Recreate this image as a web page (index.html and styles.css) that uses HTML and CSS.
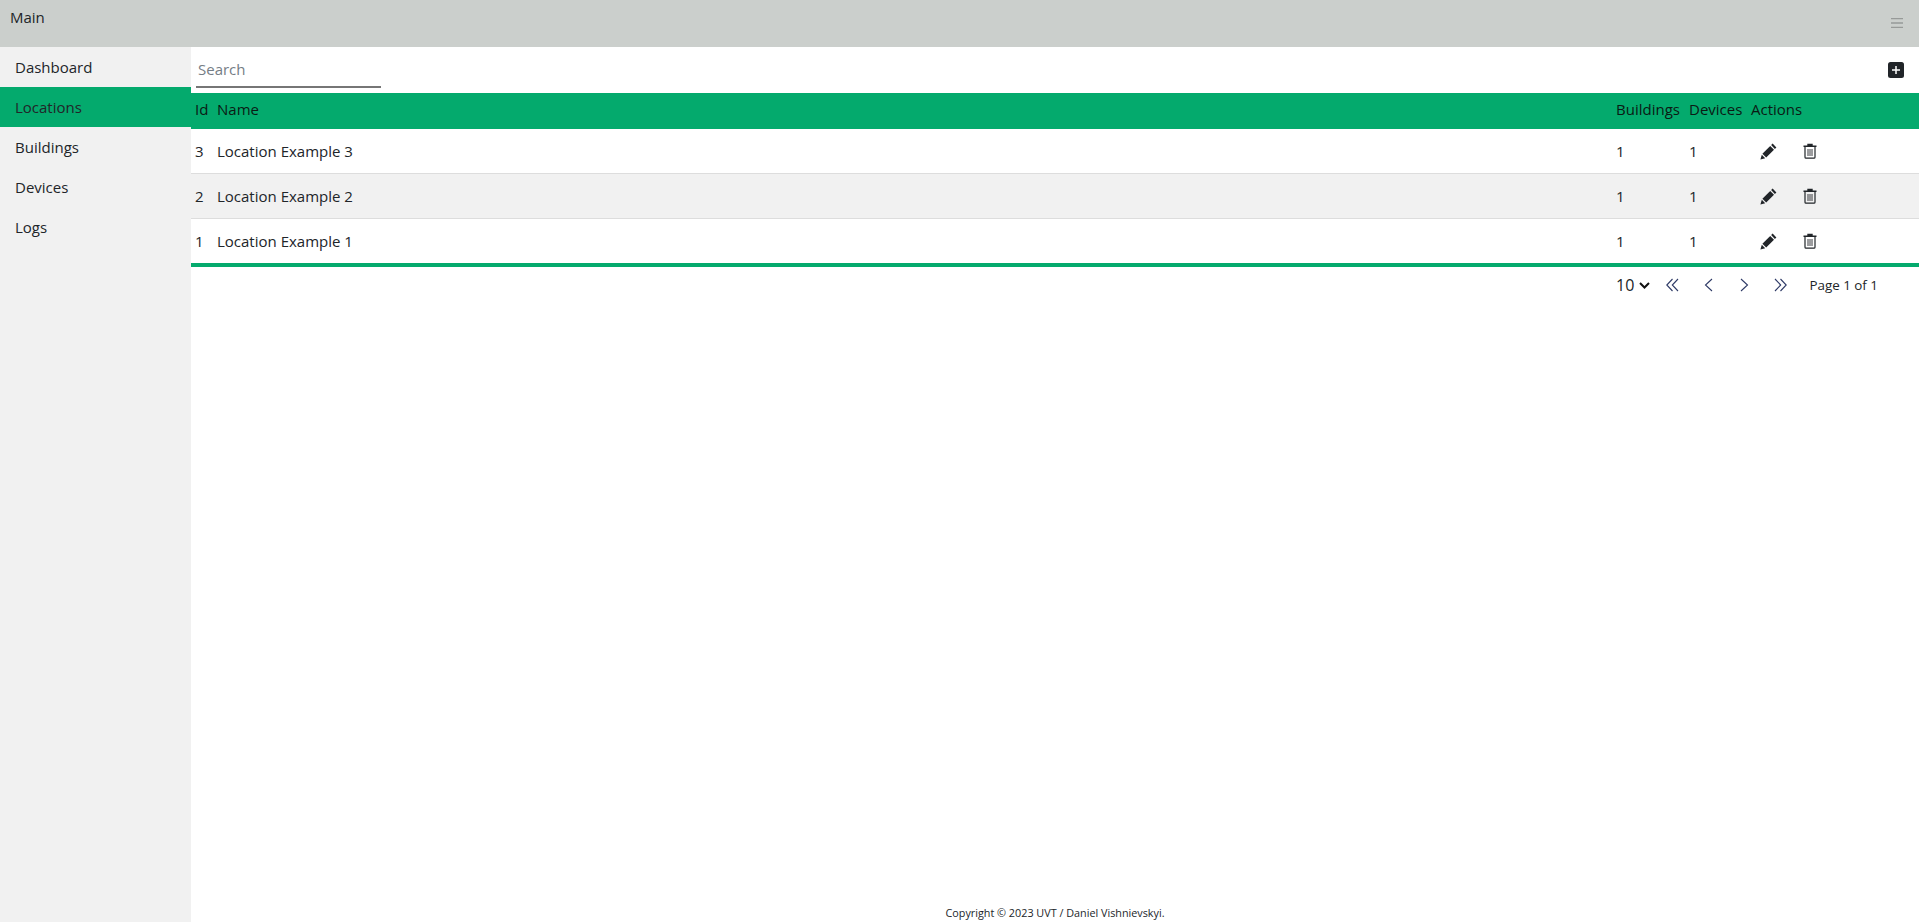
FILE: index.html
```html
<!DOCTYPE html>
<html lang="en">
<head>
    <meta charset="UTF-8">
    <meta content="width=device-width" name="viewport">
    <title>Locations</title>
    <link rel="stylesheet" href="styles.css">
</head>
<body>
    <div class="topbar">
        <span class="brand">Main</span>
        <button class="toggler" aria-label="Menu">
            <svg width="12" height="10" viewBox="0 0 12 10"><path d="M0 0.5h12M0 5h12M0 9.5h12" stroke="#979a98" stroke-width="1.4"/></svg>
        </button>
    </div>
    <div class="layout">
        <nav class="sidebar">
            <a href="#">Dashboard</a>
            <a href="#" class="active">Locations</a>
            <a href="#">Buildings</a>
            <a href="#">Devices</a>
            <a href="#">Logs</a>
        </nav>
        <div class="content">
            <div class="toolbar">
                <input class="search" type="text" placeholder="Search">
                <button class="add" aria-label="Add">
                    <svg width="16" height="16" viewBox="0 0 16 16"><rect width="16" height="16" rx="2.5" fill="#212529"/><path d="M8 4v8M4 8h8" stroke="#fff" stroke-width="1.5"/></svg>
                </button>
            </div>
            <table cellspacing="0" cellpadding="0">
                <colgroup>
                    <col class="c-id"><col><col class="c-buildings"><col class="c-devices"><col class="c-actions">
                </colgroup>
                <thead>
                    <tr><th>Id</th><th>Name</th><th>Buildings</th><th>Devices</th><th>Actions</th></tr>
                </thead>
                <tbody>
                    <tr>
                        <td>3</td><td>Location Example 3</td><td>1</td><td>1</td>
                        <td class="actions">
                            <div class="icons">
                                <svg width="17" height="17" viewBox="0 0 17 17"><path d="M12.6 0.6 16.4 4.4 14.9 5.9 11.1 2.1zM10.2 3 14 6.8 6.2 14.6 2.4 10.8zM1.8 11.8 5.2 15.2 0.4 16.6z" fill="#212529"/></svg>
                                <svg width="14" height="16" viewBox="0 0 14 16"><path d="M0.5 2.4h13v1.6h-13zM4.3 2.4V0.8h5.4v1.6" fill="#212529"/><path d="M2 4v10.2c0 .6.4 1 1 1h8c.6 0 1-.4 1-1V4" fill="none" stroke="#212529" stroke-width="1.2"/><path d="M5 6v7M7 6v7M9 6v7" stroke="#212529" stroke-width=".9"/></svg>
                            </div>
                        </td>
                    </tr>
                    <tr class="even">
                        <td>2</td><td>Location Example 2</td><td>1</td><td>1</td>
                        <td class="actions">
                            <div class="icons">
                                <svg width="17" height="17" viewBox="0 0 17 17"><path d="M12.6 0.6 16.4 4.4 14.9 5.9 11.1 2.1zM10.2 3 14 6.8 6.2 14.6 2.4 10.8zM1.8 11.8 5.2 15.2 0.4 16.6z" fill="#212529"/></svg>
                                <svg width="14" height="16" viewBox="0 0 14 16"><path d="M0.5 2.4h13v1.6h-13zM4.3 2.4V0.8h5.4v1.6" fill="#212529"/><path d="M2 4v10.2c0 .6.4 1 1 1h8c.6 0 1-.4 1-1V4" fill="none" stroke="#212529" stroke-width="1.2"/><path d="M5 6v7M7 6v7M9 6v7" stroke="#212529" stroke-width=".9"/></svg>
                            </div>
                        </td>
                    </tr>
                    <tr>
                        <td>1</td><td>Location Example 1</td><td>1</td><td>1</td>
                        <td class="actions">
                            <div class="icons">
                                <svg width="17" height="17" viewBox="0 0 17 17"><path d="M12.6 0.6 16.4 4.4 14.9 5.9 11.1 2.1zM10.2 3 14 6.8 6.2 14.6 2.4 10.8zM1.8 11.8 5.2 15.2 0.4 16.6z" fill="#212529"/></svg>
                                <svg width="14" height="16" viewBox="0 0 14 16"><path d="M0.5 2.4h13v1.6h-13zM4.3 2.4V0.8h5.4v1.6" fill="#212529"/><path d="M2 4v10.2c0 .6.4 1 1 1h8c.6 0 1-.4 1-1V4" fill="none" stroke="#212529" stroke-width="1.2"/><path d="M5 6v7M7 6v7M9 6v7" stroke="#212529" stroke-width=".9"/></svg>
                            </div>
                        </td>
                    </tr>
                </tbody>
            </table>
            <div class="pager">
                <span class="size">10
                    <svg width="11" height="7" viewBox="0 0 11 7"><path d="M1 1l4.5 4.5L10 1" fill="none" stroke="#111" stroke-width="2"/></svg>
                </span>
                <svg class="arrow" width="13" height="14" viewBox="0 0 13 14"><path d="M6.5 1 0.8 7l5.7 6M12 1 6.3 7l5.7 6" fill="none" stroke="#2e3a66" stroke-width="1.1"/></svg>
                <svg class="arrow" width="13" height="14" viewBox="0 0 13 14"><path d="M10 1 3.5 7l6.5 6" fill="none" stroke="#2e3a66" stroke-width="1.1"/></svg>
                <svg class="arrow" width="13" height="14" viewBox="0 0 13 14"><path d="M3 1l6.5 6L3 13" fill="none" stroke="#2e3a66" stroke-width="1.1"/></svg>
                <svg class="arrow" width="13" height="14" viewBox="0 0 13 14"><path d="M1 1l5.7 6L1 13M6.5 1l5.7 6-5.7 6" fill="none" stroke="#2e3a66" stroke-width="1.1"/></svg>
                <span class="page-info">Page 1 of 1</span>
            </div>
            <footer class="copyright">Copyright © 2023 UVT / Daniel Vishnievskyi.</footer>
        </div>
    </div>
</body>
</html>
```
FILE: styles.css
```css
* {
    box-sizing: border-box;
}
html, body {
    height: 100%;
}
body {
    margin: 0;
    display: flex;
    flex-direction: column;
    font-family: "Open Sans", "Noto Sans", sans-serif;
    font-size: 15px;
    color: #212529;
    background-color: #fff;
}
button {
    border: 0 none;
    padding: 0;
    background: none;
    display: flex;
}

.topbar {
    height: 47px;
    flex: none;
    display: flex;
    justify-content: space-between;
    padding: 6px 16px 0 10px;
    background-color: #cbcfcc;
}
.brand {
    line-height: 23px;
}
.toggler {
    margin-top: 12px;
    height: 10px;
}

.layout {
    flex: 1;
    display: flex;
    min-height: 0;
}
.sidebar {
    width: 191px;
    flex: none;
    background-color: #f1f1f1;
}
.sidebar a {
    display: block;
    height: 40px;
    line-height: 40px;
    padding-left: 15px;
    color: #212529;
    text-decoration: none;
}
.sidebar a.active {
    background-color: #04aa6d;
}

.content {
    flex: 1;
    display: flex;
    flex-direction: column;
    min-width: 0;
}
.toolbar {
    height: 46px;
    flex: none;
    display: flex;
    justify-content: space-between;
    padding: 0 15px 0 5px;
}
.search {
    width: 185px;
    height: 41px;
    padding: 4px 2px 0;
    border: 0 none;
    border-bottom: 2px solid #767676;
    outline: none;
    font: inherit;
}
.search::placeholder {
    color: #757d85;
}
.add {
    margin-top: 15px;
    height: 16px;
}

table {
    width: 100%;
    table-layout: fixed;
    border-collapse: separate;
    border-spacing: 0;
    border-bottom: 4px solid #04aa6d;
}
.c-id { width: 22px; }
.c-buildings { width: 73px; }
.c-devices { width: 62px; }
.c-actions { width: 172px; }
th {
    height: 36px;
    padding: 0 4px 4px;
    text-align: left;
    font-weight: 400;
    white-space: nowrap;
    color: #0b1a14;
    background-color: #04aa6d;
}
td {
    height: 45px;
    padding: 0 4px;
    white-space: nowrap;
    border-bottom: 1px solid #ddd;
}
tr:last-child td {
    border-bottom: 0 none;
    height: 44px;
}
tr.even td {
    background-color: #f1f1f1;
}
.actions {
    padding-left: 13px;
}
.icons {
    display: flex;
    align-items: center;
    gap: 26px;
}

.pager {
    height: 36px;
    flex: none;
    display: flex;
    align-items: center;
    padding-right: 41px;
    justify-content: flex-end;
    font-size: 13.4px;
}
.size {
    display: flex;
    align-items: center;
    gap: 5px;
    font-size: 16px;
    margin-right: 16px;
}
.arrow {
    margin-right: 23px;
}
.page-info {
    margin-left: -1px;
}

.copyright {
    margin-top: auto;
    height: 17px;
    line-height: 16px;
    text-align: center;
    font-size: 10.8px;
}
```
